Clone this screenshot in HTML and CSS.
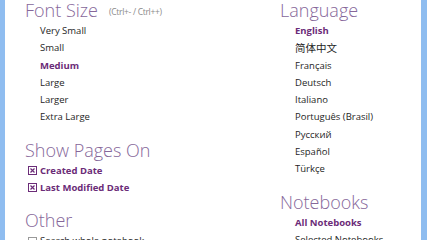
FILE: index.html
```html
<!DOCTYPE html>
<html>
<head>
<meta charset="utf-8">
<link rel="stylesheet" href="styles.css">
</head>
<body>
<div class="frame">
  <div class="col col-left">
    <section class="group">
      <h2 class="heading">Font Size<span class="hint">(Ctrl+- / Ctrl++)</span></h2>
      <ul class="list">
        <li class="item">Very Small</li>
        <li class="item">Small</li>
        <li class="item selected">Medium</li>
        <li class="item">Large</li>
        <li class="item">Larger</li>
        <li class="item">Extra Large</li>
      </ul>
    </section>
    <section class="group">
      <h2 class="heading">Show Pages On</h2>
      <ul class="list">
        <li class="item check on"><span class="box"><svg viewBox="0 0 9 9" width="9" height="9"><rect x="0.5" y="0.5" width="8" height="8" fill="none" stroke="#6b2c78" stroke-width="1"/><path d="M2.5 2.5 L6.5 6.5 M6.5 2.5 L2.5 6.5" stroke="#6b2c78" stroke-width="1.2"/></svg></span>Created Date</li>
        <li class="item check on"><span class="box"><svg viewBox="0 0 9 9" width="9" height="9"><rect x="0.5" y="0.5" width="8" height="8" fill="none" stroke="#6b2c78" stroke-width="1"/><path d="M2.5 2.5 L6.5 6.5 M6.5 2.5 L2.5 6.5" stroke="#6b2c78" stroke-width="1.2"/></svg></span>Last Modified Date</li>
      </ul>
    </section>
    <section class="group">
      <h2 class="heading">Other</h2>
      <ul class="list">
        <li class="item check"><span class="box"><svg viewBox="0 0 9 9" width="9" height="9"><rect x="0.5" y="0.5" width="8" height="8" fill="none" stroke="#999" stroke-width="1"/></svg></span>Search whole notebook</li>
      </ul>
    </section>
  </div>
  <div class="col col-right">
    <section class="group">
      <h2 class="heading">Language</h2>
      <ul class="list">
        <li class="item selected">English</li>
        <li class="item cjk">简体中文</li>
        <li class="item">Français</li>
        <li class="item">Deutsch</li>
        <li class="item">Italiano</li>
        <li class="item">Português (Brasil)</li>
        <li class="item">Русский</li>
        <li class="item">Español</li>
        <li class="item">Türkçe</li>
      </ul>
    </section>
    <section class="group">
      <h2 class="heading">Notebooks</h2>
      <ul class="list">
        <li class="item selected">All Notebooks</li>
        <li class="item">Selected Notebooks</li>
      </ul>
    </section>
  </div>
</div>
</body>
</html>
```
FILE: styles.css
```css
html, body {
  margin: 0;
  padding: 0;
  background: #ffffff;
  overflow: hidden;
}
body {
  width: 427px;
  height: 240px;
  font-family: "Open Sans", "Noto Sans CJK SC", sans-serif;
}
.frame {
  box-sizing: border-box;
  width: 427px;
  height: 240px;
  border-left: 5px solid #8fbdf0;
  border-right: 6px solid #8fbdf0;
  display: grid;
  grid-template-columns: 255px 1fr;
  padding-left: 20px;
}
.col {
  display: flex;
  flex-direction: column;
  gap: 14px;
}
.heading {
  margin: 0 0 2px 0;
  font-weight: 300;
  font-size: 18px;
  line-height: 20px;
  height: 20px;
  color: #86679a;
  white-space: nowrap;
}
.hint {
  display: inline-block;
  font-size: 8.5px;
  line-height: 0;
  font-weight: 400;
  letter-spacing: -0.3px;
  color: #8a8a8a;
  margin-left: 11px;
  vertical-align: 2px;
}
.list {
  list-style: none;
  margin: 0;
  padding: 0 0 0 15px;
}
.item {
  font-size: 9.5px;
  line-height: 17.3px;
  height: 17.3px;
  color: #1e1e1e;
  white-space: nowrap;
  display: flex;
  align-items: center;
}
.item.selected {
  font-weight: 700;
  color: #6b2c78;
}
.item.cjk {
  font-family: "Noto Sans CJK SC", sans-serif;
  font-size: 10.5px;
}
.item.check {
  margin-left: -12px;
}
.item.check.on {
  font-weight: 700;
  color: #6b2c78;
}
.box {
  display: inline-flex;
  width: 9px;
  height: 9px;
  margin-right: 3px;
}
```
